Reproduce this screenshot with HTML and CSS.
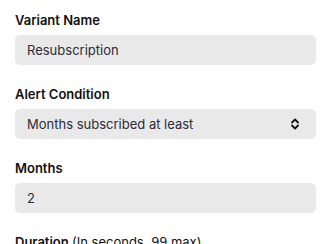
FILE: index.html
```html
<!DOCTYPE html>
<html>
<head>
<meta charset="utf-8">
<link rel="stylesheet" href="styles.css">
</head>
<body>
<form class="form">
  <div class="field">
    <label class="label">Variant Name</label>
    <div class="input">Resubscription</div>
  </div>
  <div class="field">
    <label class="label">Alert Condition</label>
    <div class="input select">
      <span>Months subscribed at least</span>
      <svg class="chev" width="10" height="12" viewBox="0 0 10 12"><path d="M2 4.5L5 1.5L8 4.5M2 7.5L5 10.5L8 7.5" fill="none" stroke="#111" stroke-width="1.8" stroke-linecap="round" stroke-linejoin="round"/></svg>
    </div>
  </div>
  <div class="field">
    <label class="label">Months</label>
    <div class="input">2</div>
  </div>
  <div class="field">
    <label class="label">Duration <span class="hint">(In seconds, 99 max)</span></label>
  </div>
</form>
</body>
</html>
```
FILE: styles.css
```css
html, body {
  margin: 0;
  padding: 0;
  background: #fff;
}
body {
  font-family: Inter, "Noto Sans", sans-serif;
  overflow: hidden;
}
.form {
  padding: 12px 14px 0 15px;
  display: flex;
  flex-direction: column;
  gap: 21px;
}
.field {
  display: flex;
  flex-direction: column;
  gap: 7px;
}
.label {
  font-size: 13px;
  font-weight: 600;
  line-height: 16px;
  color: #111;
}
.hint {
  font-weight: 400;
}
.input {
  height: 30px;
  box-sizing: border-box;
  background: #e9e9e9;
  border-radius: 5px;
  padding: 0 12px;
  font-size: 13px;
  color: #2b2b3a;
  display: flex;
  align-items: center;
}
.select {
  justify-content: space-between;
  padding-right: 16px;
}
.chev {
  display: block;
}
```
